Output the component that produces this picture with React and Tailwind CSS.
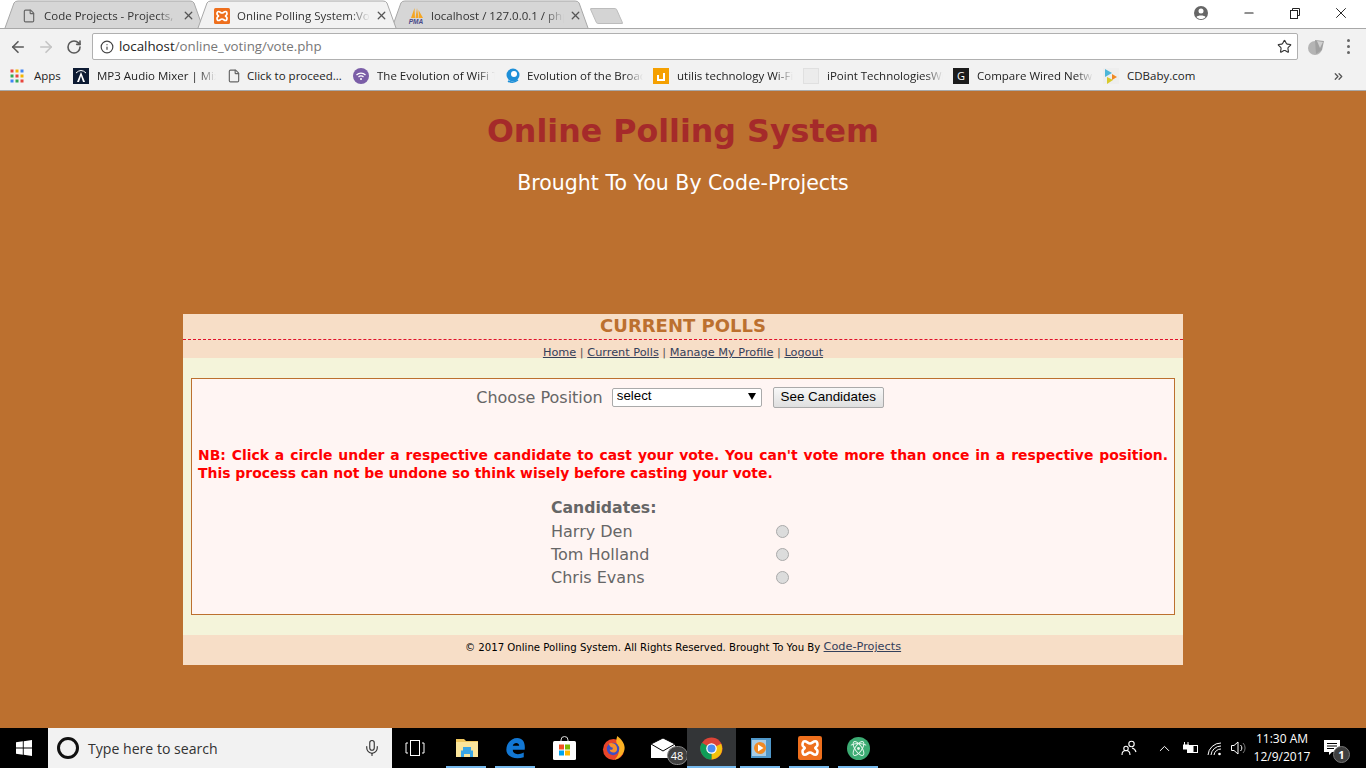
import React from "react";
import {
  ArrowLeft,
  ArrowRight,
  RotateCw,
  Info,
  Star,
  File,
  X,
  Minus,
  Mic,
  ChevronUp,
  ChevronsRight,
} from "lucide-react";

const uiFont = "font-['Open_Sans',sans-serif]";
const pageFont = "font-['DejaVu_Sans',sans-serif]";
const fade = "[mask-image:linear-gradient(to_right,black_85%,transparent)]";

const XamppIcon = ({ size = 16 }) => (
  <svg width={size} height={size} viewBox="0 0 16 16">
    <rect width="16" height="16" rx="1.500" fill="#ee6f1d" />
    <path
      d="M4.500 3.500C6 3.500 6.500 5 8 5C9.500 5 10 3.500 11.500 3.500C13 3.500 13 5.500 13 6C13 7 11.500 7.500 11.500 8C11.500 8.500 13 9 13 10C13 10.500 13 12.500 11.500 12.500C10 12.500 9.500 11 8 11C6.500 11 6 12.500 4.500 12.500C3 12.500 3 10.500 3 10C3 9 4.500 8.500 4.500 8C4.500 7.500 3 7 3 6C3 5.500 3 3.500 4.500 3.500z"
      fill="none"
      stroke="#fff"
      strokeWidth="1.700"
    />
  </svg>
);

const Tab = ({ active, icon, title, className }) => (
  <div className={`relative h-[28px] pt-[3px] flex items-center shrink-0 ${className}`}>
    <svg className="absolute inset-0 w-full h-full" viewBox="0 0 200 28" preserveAspectRatio="none">
      <path
        d="M1 28 L10 3 Q11 1 14 1 L186 1 Q189 1 190 3 L199 28"
        fill={active ? "#f2f2f2" : "#d6d6d6"}
        stroke="#a8a8a8"
        vectorEffect="non-scaling-stroke"
      />
    </svg>
    <div className="relative w-[16px] ml-[17px] flex justify-center">{icon}</div>
    <span className={`relative ml-[7px] w-[133px] whitespace-nowrap overflow-hidden text-[11.500px] text-[#333] ${uiFont} ${fade}`}>
      {title}
    </span>
    <X className="relative ml-[5px] text-[#555]" size={13} strokeWidth={2.4} />
  </div>
);

const Bookmark = ({ icon, label, className, labelClass = "ml-[8px]", noFade }) => (
  <div className={`flex items-center h-full shrink-0 ${className}`}>
    <div className="w-[16px] h-[16px] flex items-center justify-center shrink-0">{icon}</div>
    <span className={`${labelClass} mr-[10px] whitespace-nowrap overflow-hidden text-[11.500px] text-[#222] ${uiFont} ${noFade ? "" : fade}`}>
      {label}
    </span>
  </div>
);

const AppsIcon = () => {
  const colors = ["#e8453c", "#f4b400", "#3f84f4", "#34a853", "#e8453c", "#f4b400", "#3f84f4", "#34a853", "#e8453c"];
  return (
    <svg width="14" height="14" viewBox="0 0 14 14">
      {colors.map((c, i) => (
        <rect key={i} x={(i % 3) * 5 + 0.5} y={Math.floor(i / 3) * 5 + 0.5} width="3" height="3" fill={c} />
      ))}
    </svg>
  );
};

const TabStrip = () => (
  <div className="h-[29px] bg-white flex pl-[4px] border-b border-[#a8a8a8] shrink-0">
    <Tab
      title="Code Projects - Projects, Source"
      icon={<File size={14} className="text-[#666]" />}
      className="w-[200px]"
    />
    <Tab active title="Online Polling System:Vote" icon={<XamppIcon size={16} />} className="w-[200px] -ml-[7px] z-10" />
    <Tab
      title="localhost / 127.0.0.1 / phpMyAdmin"
      icon={
        <svg width="16" height="16" viewBox="0 0 16 16">
          <path d="M3 10 L6.500 0 L7 10z M7.500 10 L9 0 L10.500 10z M11 10 L10.500 2 L15 10z" fill="#f5a623" />
          <text x="8" y="15.500" textAnchor="middle" fontSize="6.500" fontWeight="700" fontStyle="italic" fill="#4a4a8a" fontFamily="Liberation Sans">
            PMA
          </text>
        </svg>
      }
      className="w-[198px] -ml-[6px]"
    />
    <div className="w-[27px] h-[16px] mt-[8px] ml-[4px] bg-[#d4d4d4] border border-[#bcbcbc] rounded-[2px] skew-x-[24deg]" />
    <div className="ml-auto flex items-center h-[26px] text-[#555]">
      <svg width="16" height="16" viewBox="0 0 16 16" className="mr-[33px]">
        <circle cx="8" cy="8" r="7" fill="#666" />
        <circle cx="8" cy="6" r="2.500" fill="#fff" />
        <path d="M3.500 12c1-2 8-2 9 0-1 1.500-3 2-4.500 2s-3.500-.5-4.500-2" fill="#fff" />
      </svg>
      <Minus size={14} className="mr-[33px] text-[#222]" />
      <svg width="12" height="12" viewBox="0 0 12 12" className="mr-[31px]" fill="none" stroke="#222">
        <rect x="1.500" y="3.500" width="7" height="8" fill="#fff" />
        <path d="M3.500 3.500V1.500h7v7H8.500" />
      </svg>
      <X size={18} strokeWidth={1.2} className="mr-[16px] text-[#111]" />
    </div>
  </div>
);

const Toolbar = () => (
  <div className="h-[33px] pt-[2px] bg-[#f2f2f2] flex items-center shrink-0">
    <ArrowLeft size={18} strokeWidth={2.2} className="ml-[9px] text-[#5a5a5a]" />
    <ArrowRight size={18} strokeWidth={2.2} className="ml-[10px] text-[#c4c4c4]" />
    <RotateCw size={16} strokeWidth={2.4} className="ml-[11px] text-[#5a5a5a]" />
    <div className="ml-[10px] w-[1206px] h-[27px] bg-white border border-[#b0b0b0] rounded-[2px] flex items-center">
      <Info size={14} strokeWidth={2} className="ml-[7px] text-[#444]" />
      <span className={`ml-[5px] text-[13.300px] ${uiFont} text-[#222]`}>
        localhost<span className="text-[#777]">/online_voting/vote.php</span>
      </span>
      <Star size={15} strokeWidth={1.8} className="ml-auto mr-[5px] text-[#333]" />
    </div>
    <svg width="18" height="18" viewBox="0 0 18 18" className="ml-[9px]">
      <circle cx="8" cy="10" r="7" fill="#b4b4b4" />
      <path d="M8 2 L17 3 L15 12 L9 16z" fill="#a0a0a0" />
      <path d="M10 3 L16 4 L13 10z" fill="#d0d0d0" />
    </svg>
    <div className="ml-[22px] flex flex-col gap-[3px]">
      <div className="w-[3px] h-[3px] rounded-full bg-[#666]" />
      <div className="w-[3px] h-[3px] rounded-full bg-[#666]" />
      <div className="w-[3px] h-[3px] rounded-full bg-[#666]" />
    </div>
  </div>
);

const BookmarksBar = () => (
  <div className="h-[29px] bg-[#f2f2f2] flex items-center pl-[9px] border-b border-[#a8a8a8] shrink-0">
    <Bookmark className="w-[64px]" icon={<AppsIcon />} label="Apps" labelClass="ml-[9px]" noFade />
    <Bookmark
      className="w-[153px]"
      label="MP3 Audio Mixer | Mixer"
      icon={
        <svg width="16" height="16" viewBox="0 0 16 16">
          <rect width="16" height="16" fill="#0d1b33" />
          <path d="M8 4 L12 14 H10 L8 8 L6 14 H4z" fill="#fff" />
          <path d="M3 5 Q8 0 13 5" fill="none" stroke="#fff" />
        </svg>
      }
    />
    <Bookmark
      className="w-[127px]"
      label="Click to proceed..."
      labelClass="ml-[5px]"
      noFade
      icon={<File size={14} className="text-[#666]" />}
    />
    <Bookmark
      className="w-[152px]"
      label="The Evolution of WiFi Technology"
      icon={
        <svg width="16" height="16" viewBox="0 0 16 16" fill="none">
          <circle cx="8" cy="8" r="8" fill="#7b5ea7" />
          <path d="M3.500 7a6.500 6.500 0 0 1 9 0M5.500 9a3.500 3.500 0 0 1 5 0" stroke="#fff" strokeWidth="1.200" />
          <circle cx="8" cy="11" r="1" fill="#fff" />
        </svg>
      }
    />
    <Bookmark
      className="w-[148px]"
      label="Evolution of the Broadband"
      labelClass="ml-[6px]"
      icon={
        <svg width="16" height="16" viewBox="0 0 16 16" fill="none">
          <circle cx="8" cy="7" r="6.500" fill="#1d8fd8" />
          <circle cx="9" cy="6" r="3" fill="#fff" />
          <path d="M3 13 Q8 16 13 12" stroke="#1d8fd8" strokeWidth="1.500" />
        </svg>
      }
    />
    <Bookmark
      className="w-[150px]"
      label="utilis technology Wi-Fi Solutions"
      icon={
        <svg width="16" height="16" viewBox="0 0 16 16" fill="none">
          <rect width="16" height="16" fill="#f5a000" />
          <path d="M5 7v5h6V5" stroke="#fff" strokeWidth="2" />
        </svg>
      }
    />
    <Bookmark className="w-[150px]" label="iPoint TechnologiesWiFi" icon={<div className="w-[16px] h-[16px] bg-[#ececec] border border-[#e0e0e0]" />} />
    <Bookmark
      className="w-[150px]"
      label="Compare Wired Networks"
      icon={<div className={`w-[16px] h-[16px] bg-[#1c1c1c] text-white text-[11px] leading-[16px] text-center ${uiFont}`}>G</div>}
    />
    <Bookmark
      className="w-[110px]"
      label="CDBaby.com"
      noFade
      icon={
        <svg width="16" height="16" viewBox="0 0 16 16">
          <rect width="16" height="16" fill="#eee" />
          <path d="M2 1 L9 5 L2 9z" fill="#4db6d8" />
          <path d="M9 6 L14 9 L9 12z" fill="#f08a24" />
          <path d="M4 9 L10 12 L4 16z" fill="#d8c92a" />
        </svg>
      }
    />
    <ChevronsRight size={13} strokeWidth={2.4} className="ml-[119px] text-[#555]" />
  </div>
);

const WinLogo = () => (
  <svg width="16" height="16" viewBox="0 0 16 16" fill="#fff">
    <path d="M0 2.300 L6.800 1.300 V7.600 H0z M7.700 1.200 L16 0 V7.600 H7.700z M0 8.400 H6.800 V14.700 L0 13.700z M7.700 8.400 H16 V16 L7.700 14.800z" />
  </svg>
);

const TaskCell = ({ children, running, active }) => (
  <div className={`relative w-[49px] h-full flex items-center justify-center shrink-0 ${active ? "bg-[#333537]" : ""}`}>
    {children}
    {running && <div className="absolute bottom-0 left-[4px] right-[5px] h-[2px] bg-[#76b9ed]" />}
    {active && <div className="absolute bottom-0 left-0 right-0 h-[2px] bg-[#76b9ed]" />}
  </div>
);

const Taskbar = () => (
  <div className="h-[40px] bg-black flex items-center shrink-0 relative">
    <div className="w-[48px] flex justify-center">
      <WinLogo />
    </div>
    <div className="w-[344px] h-full bg-[#f2f2f2] flex items-center">
      <div className="ml-[9px] w-[22px] h-[22px] rounded-full border-[3px] border-[#111]" />
      <span className={`ml-[9px] pt-[1px] text-[14.100px] text-[#333] ${uiFont}`}>Type here to search</span>
      <Mic size={18} strokeWidth={1.5} className="ml-auto mr-[11px] text-[#333]" />
    </div>
    <div className="flex h-full ml-[1px]">
      <TaskCell>
        <svg width="20" height="18" viewBox="0 0 20 18" fill="none" stroke="#fff" strokeWidth="1" className="mr-[5px]">
          <rect x="5.500" y="1.500" width="9" height="15" />
          <path d="M3 4H1v10h2M17 4h2v10h-2" />
        </svg>
      </TaskCell>
      <TaskCell running>
        <svg width="22" height="18" viewBox="0 0 22 18">
          <path d="M0 0h8l2 2h12v16H0z" fill="#f0c75e" />
          <rect y="3" width="22" height="15" fill="#fbe59b" />
          <path d="M5 18v-6.500h2V8h8v3.500h2V18h-3v-3H8v3z" fill="#3aa6e6" />
        </svg>
      </TaskCell>
      <TaskCell running>
        <svg width="21" height="22" viewBox="0 0 22 24" fill="none">
          <path d="M1 14 C1 6 7 1 13 1 C19 1 22 6 21 14 H8 C8 19 14 20 20 17 V22 C11 25 1 22 1 14z M8 9.500 H15 C15 5.500 9 5.500 8 9.500z" fill="#1277d3" fillRule="evenodd" />
        </svg>
      </TaskCell>
      <TaskCell>
        <svg width="23" height="24" viewBox="0 0 23 24" fill="none">
          <path d="M8 7V4a3.500 3.500 0 0 1 7 0v3" stroke="#ddd" strokeWidth="1" />
          <rect y="5" width="23" height="19" rx="1.500" fill="#fff" />
          <rect x="6" y="8.500" width="5" height="5" fill="#f25022" />
          <rect x="12" y="8.500" width="5" height="5" fill="#7fba00" />
          <rect x="6" y="14.500" width="5" height="5" fill="#00a4ef" />
          <rect x="12" y="14.500" width="5" height="5" fill="#ffb900" />
        </svg>
      </TaskCell>
      <TaskCell>
        <svg width="23" height="24" viewBox="0 0 24 25">
          <circle cx="12" cy="14" r="11" fill="#e8452a" />
          <path d="M16 0 C22 5 25 10 23 16 C21 21 17 24 13 25 C18 20 19 14 16 9 C14 6 15 3 16 0z" fill="#fbb124" />
          <circle cx="11.500" cy="13.500" r="6.500" fill="#3d4fc4" />
          <path d="M7 8 C11 6 17 9 15.500 15 C13 19 8 17 8 14 C10 15 12 14 11 12 C9 12 8 10 7 8z" fill="#f9902a" />
        </svg>
      </TaskCell>
      <TaskCell>
        <div className="relative">
          <svg width="24" height="20" viewBox="0 0 24 20">
            <rect y="6" width="24" height="14" fill="#fff" />
            <path d="M0 6 L12 0 L24 6 L12 13z" fill="#fff" stroke="#000" strokeWidth="1" />
          </svg>
          <div className={`absolute -right-[13px] -bottom-[7px] w-[21px] h-[19px] rounded-full bg-[#3f3f3f] border border-[#888] text-[11px] leading-[17px] text-center text-white ${uiFont}`}>
            48
          </div>
        </div>
      </TaskCell>
      <TaskCell active>
        <svg width="23" height="23" viewBox="0 0 24 24">
          <circle cx="12" cy="12" r="11.500" fill="#db4437" />
          <path d="M12 12 L22 7 A11.500 11.500 0 0 1 12 23.500z" fill="#f4c20d" />
          <path d="M12 12 L12 23.500 A11.500 11.500 0 0 1 2 6z" fill="#0f9d58" />
          <circle cx="12" cy="12" r="5.500" fill="#fff" />
          <circle cx="12" cy="12" r="4.200" fill="#4a8cf0" />
        </svg>
      </TaskCell>
      <TaskCell running>
        <svg width="20" height="20" viewBox="0 0 20 20">
          <rect width="20" height="20" fill="#4f97c9" />
          <rect x="1" y="2" width="14" height="16" fill="#a8cde6" />
          <circle cx="9" cy="10" r="6" fill="#f08a24" />
          <path d="M7 6.500 L12.500 10 L7 13.500z" fill="#fff" />
        </svg>
      </TaskCell>
      <TaskCell running>
        <XamppIcon size={24} />
      </TaskCell>
      <TaskCell running>
        <svg width="23" height="23" viewBox="0 0 24 24" fill="none">
          <circle cx="12" cy="12" r="12" fill="#3cab73" />
          <ellipse cx="12" cy="12" rx="3.500" ry="8.500" stroke="#e8f8ee" transform="rotate(35 12 12)" />
          <ellipse cx="12" cy="12" rx="3.500" ry="8.500" stroke="#e8f8ee" transform="rotate(-35 12 12)" />
          <path d="M4 8.500 Q12 5 20 8.500" stroke="#e8f8ee" />
          <circle cx="12" cy="12" r="1.500" fill="#e8f8ee" />
        </svg>
      </TaskCell>
    </div>
    <div className="ml-auto flex items-center h-full text-white">
      <svg width="16" height="16" viewBox="0 0 16 16" fill="none" stroke="#fff" strokeWidth="1.100" className="mr-[19px]">
        <circle cx="10.500" cy="4" r="2.700" />
        <circle cx="5" cy="8.500" r="2.200" />
        <path d="M1 15c0-3 2-4.500 4-4.500S9 12 9 15M11 8c2 .4 3.500 2 4 4" />
      </svg>
      <ChevronUp size={17} strokeWidth={1.4} className="mr-[9px]" />
      <svg width="16" height="13" viewBox="0 0 16 13" fill="none" stroke="#fff" className="mr-[9px]">
        <rect x="5.500" y="3.500" width="10" height="7" />
        <path d="M2.500 0v3M6 0v3" />
        <rect x="1.500" y="3" width="5" height="4" fill="#fff" />
        <rect x="6" y="4" width="5" height="6" fill="#fff" />
      </svg>
      <svg width="16" height="15" viewBox="0 0 16 15" fill="none" stroke="#fff" className="mr-[7px]">
        <path d="M1 14A13 13 0 0 1 14 2M4 14A10 10 0 0 1 14 5M7 14a7 7 0 0 1 7-6" />
        <circle cx="12.500" cy="13" r="1.300" fill="#fff" stroke="none" />
      </svg>
      <svg width="17" height="16" viewBox="0 0 17 16" fill="none" stroke="#fff" className="mr-[3px]">
        <path d="M1.500 5.500H4L8 2V14L4 10.500H1.500z" />
        <path d="M10.500 5a4 4 0 0 1 0 6" />
        <path d="M13 3a7 7 0 0 1 0 10" stroke="#777" />
      </svg>
      <div className={`w-[64px] text-center text-[12px] leading-[18px] ${uiFont}`}>
        <div>11:30 AM</div>
        <div>12/9/2017</div>
      </div>
      <div className="relative ml-[10px] mr-[25px]">
        <svg width="17" height="16" viewBox="0 0 17 16">
          <path d="M0 0H16V12H8L5 15V12H0z" fill="#fff" />
          <path d="M3 3.500H13M3 6H13M3 8.500H10" stroke="#000" />
        </svg>
        <div className={`absolute -right-[9px] -bottom-[7px] w-[17px] h-[17px] rounded-full bg-[#3f3f3f] border border-[#777] text-[11px] leading-[15px] font-bold text-center ${uiFont}`}>
          1
        </div>
      </div>
    </div>
  </div>
);

const Radio = () => (
  <input
    type="radio"
    name="vote"
    className="appearance-none w-[13px] h-[13px] rounded-full border border-[#aaa] bg-[#dcdcdc] block"
  />
);

const candidates = ["Harry Den", "Tom Holland", "Chris Evans"];

const PollCard = () => (
  <div className={`w-[1000px] mx-auto ${pageFont}`}>
    <div className="bg-[#f7dec7] h-[44px]">
      <div className="h-[26px] border-b border-dashed border-[#e0102a] text-center text-[18px] leading-[24px] font-bold text-[#bc702f]">
        CURRENT POLLS
      </div>
      <div className="text-center text-[11.300px] leading-[25px] text-[#555]">
        <a className="underline text-[#34405a]">Home</a> | <a className="underline text-[#34405a]">Current Polls</a> |{" "}
        <a className="underline text-[#34405a]">Manage My Profile</a> | <a className="underline text-[#34405a]">Logout</a>
      </div>
    </div>
    <div className="bg-[#f4f4da] px-[8px] pt-[20px] pb-[20px]">
      <div className="h-[237px] border border-[#bc702f] bg-[#fff5f3] px-[6px]">
        <div className="flex items-center justify-center h-[36px] pr-[6px]">
          <span className="pt-[2px] text-[16px] text-[#666]">Choose Position</span>
          <div className="relative ml-[9px]">
            <select className="appearance-none block w-[150px] h-[19px] pl-[4px] pb-[4px] leading-[13px] bg-white border border-[#aaa] rounded-[2px] text-[13.330px] font-['Liberation_Sans',sans-serif] text-black">
              <option>select</option>
            </select>
            <span className="absolute right-[6px] top-[5px] w-0 h-0 border-x-[4px] border-x-transparent border-t-[7px] border-t-black" />
          </div>
          <button className="ml-[11px] w-[111px] h-[21px] pb-[1px] border border-[#aaa] rounded-[2px] bg-linear-to-b from-[#f8f8f8] to-[#dfdfdf] text-[13.400px] leading-[18px] text-black font-['Liberation_Sans',sans-serif]">
            See Candidates
          </button>
        </div>
        <p className="mt-[31px] text-[13.930px] leading-[18px] font-bold text-[#ff0000] text-justify">
          NB: Click a circle under a respective candidate to cast your vote. You can't vote more than once in a respective position.
          This process can not be undone so think wisely before casting your vote.
        </p>
        <div className="mt-[15px] ml-[353px] grid grid-cols-[225px_13px] items-center auto-rows-[23px]">
          <div className="col-span-2 pb-[2px] text-[15.700px] font-bold text-[#666]">Candidates:</div>
          {candidates.map((name) => (
            <React.Fragment key={name}>
              <div className="text-[16px] text-[#666]">{name}</div>
              <Radio />
            </React.Fragment>
          ))}
        </div>
      </div>
    </div>
    <div className="bg-[#f7dec7] h-[30px] pb-[5px] flex items-center justify-center text-[10.170px] text-black">
      © 2017 Online Polling System. All Rights Reserved. Brought To You By&nbsp;
      <a className="underline text-[11.300px] text-[#34405a]">Code-Projects</a>
    </div>
  </div>
);

export default function App() {
  return (
    <div className="h-screen flex flex-col overflow-hidden bg-[#bc702f]">
      <TabStrip />
      <Toolbar />
      <BookmarksBar />
      <main className="flex-1 min-h-0">
        <div className={`h-[223px] text-center ${pageFont}`}>
          <h1 className="pt-[20px] text-[31.700px] leading-[41px] font-bold text-[#a52a2a]">Online Polling System</h1>
          <p className="mt-[18px] text-[20.500px] leading-[26px] text-white">Brought To You By Code-Projects</p>
        </div>
        <PollCard />
      </main>
      <Taskbar />
    </div>
  );
}
